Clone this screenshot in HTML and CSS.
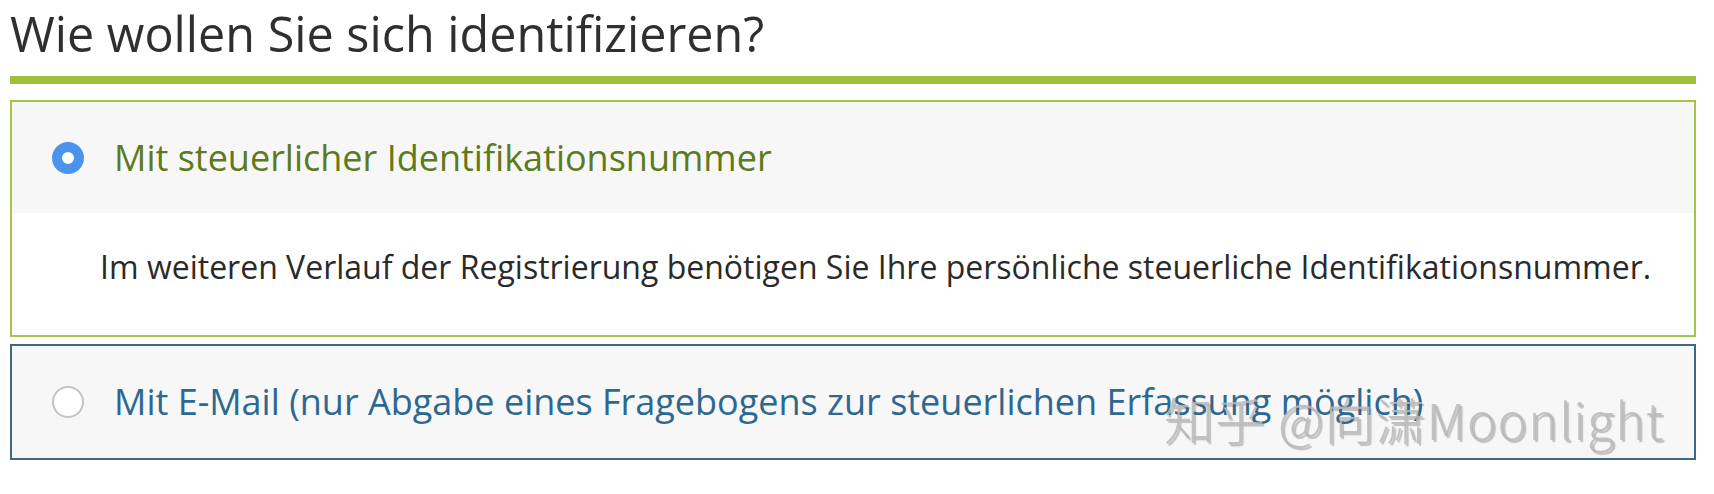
FILE: index.html
```html
<!DOCTYPE html>
<html lang="de">

<head>
    <meta charset="UTF-8">
    <title>Identifizierung</title>
    <link rel="stylesheet" href="styles.css">
</head>

<body>
    <div class="page">
        <h1 class="page-title">Wie wollen Sie sich identifizieren?</h1>

        <div class="choice choice-active">
            <label class="choice-head">
                <input type="radio" name="ident" class="radio" checked>
                <span class="choice-label">Mit steuerlicher Identifikationsnummer</span>
            </label>
            <div class="choice-body">
                Im weiteren Verlauf der Registrierung benötigen Sie Ihre persönliche steuerliche Identifikationsnummer.
            </div>
        </div>

        <div class="choice choice-other">
            <label class="choice-head">
                <input type="radio" name="ident" class="radio">
                <span class="choice-label">Mit E-Mail (nur Abgabe eines Fragebogens zur steuerlichen Erfassung möglich)</span>
            </label>
        </div>

        <div class="watermark">知乎 @向潇Moonlight</div>
    </div>
</body>

</html>
```

FILE: styles.css
```css
:root {
    --green: #9fc03b;
    --green-border: #a6c34b;
    --green-text: #5d7a1c;
    --blue-text: #2c6891;
    --blue-border: #3d6987;
    --radio-blue: #4b93ec;
    --panel-bg: #f7f7f7;
    --text-color: #333;
}

* {
    margin: 0;
    padding: 0;
    box-sizing: border-box;
}

body {
    background: #fff;
    font-family: 'Open Sans', 'Noto Sans', sans-serif;
    color: var(--text-color);
}

.page {
    position: relative;
    padding: 0 18px 0 10px;
}

.page-title {
    font-size: 48.5px;
    font-weight: 400;
    line-height: 60px;
    padding: 3px 0 13px 0;
    border-bottom: 8px solid var(--green);
    color: #2f2f2f;
}

.choice {
    margin-top: 16px;
    border: 2px solid var(--green-border);
}

.choice + .choice {
    margin-top: 7px;
}

.choice-other {
    border-color: var(--blue-border);
    background: var(--panel-bg);
}

.choice-head {
    display: flex;
    align-items: center;
    height: 111px;
    padding-left: 40px;
    background: var(--panel-bg);
    cursor: pointer;
}

.choice-other .choice-head {
    height: 112px;
}

.radio {
    appearance: none;
    width: 32px;
    height: 32px;
    border-radius: 50%;
    background: #fff;
    border: 2px solid #c4c4c4;
    margin-right: 30px;
    flex-shrink: 0;
}

.radio:checked {
    background: #fff;
    border: 10px solid var(--radio-blue);
}

.choice-label {
    font-size: 36px;
    line-height: 44px;
    color: var(--green-text);
}

.choice-other .choice-label {
    color: var(--blue-text);
}

.choice-body {
    background: #fff;
    height: 122px;
    padding: 32px 0 0 88px;
    font-size: 32px;
    line-height: 44px;
    color: #2a2a2a;
}

.watermark {
    position: absolute;
    left: 1164px;
    top: 386px;
    font-family: 'Noto Sans CJK SC', 'Noto Sans', sans-serif;
    font-weight: 300;
    font-size: 50px;
    line-height: 64px;
    letter-spacing: 1px;
    color: rgba(185, 185, 185, 0.85);
    text-shadow: 2px 2px 1px rgba(90, 90, 90, 0.35);
    pointer-events: none;
}
```
